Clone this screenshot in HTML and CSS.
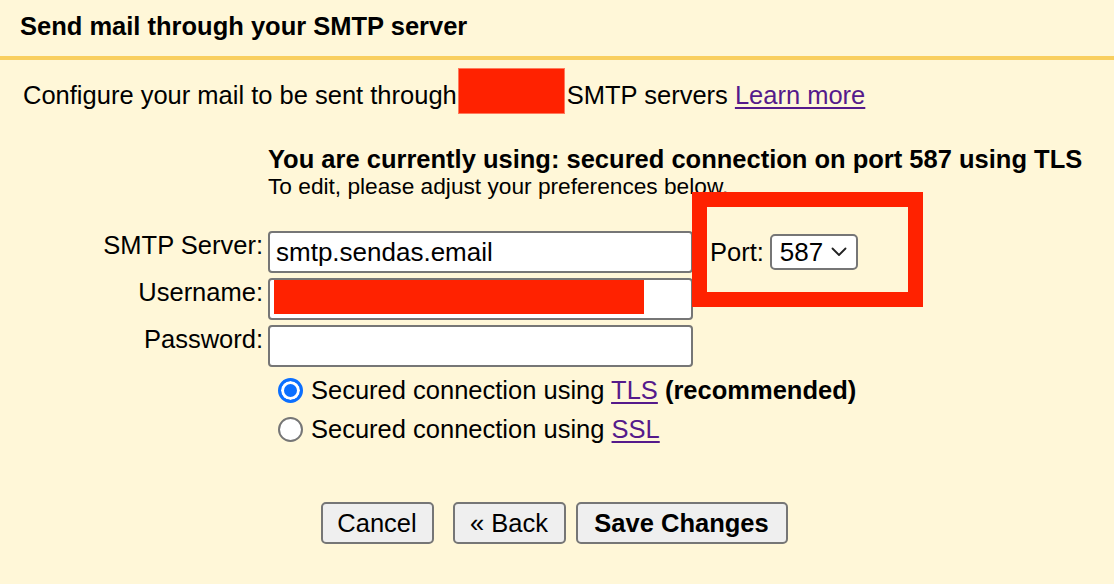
FILE: index.html
```html
<!DOCTYPE html>
<html lang="en">
<head>
<meta charset="utf-8">
<title>Send mail through your SMTP server</title>
<link rel="stylesheet" href="styles.css">
</head>
<body>
<div class="page">
  <header class="hdr">
    <h1 class="title">Send mail through your SMTP server</h1>
  </header>
  <main class="content">
    <p class="intro">Configure your mail to be sent through<span class="redact redact-name"></span>SMTP servers <a class="link" href="#">Learn more</a></p>
    <div class="status">
      <div class="status-main">You are currently using: secured connection on port 587 using TLS</div>
      <div class="status-sub">To edit, please adjust your preferences below.</div>
    </div>
    <div class="form">
      <label class="lbl">SMTP Server:</label>
      <div class="field">smtp.sendas.email</div>
      <div class="port">
        <span class="port-lbl">Port:</span>
        <div class="select"><span>587</span>
          <svg class="chev" width="16" height="10" viewBox="0 0 16 10"><path d="M1.5 1.5 L8 8 L14.5 1.5" fill="none" stroke="#222" stroke-width="1.8" stroke-linecap="round" stroke-linejoin="round"/></svg>
        </div>
      </div>
      <label class="lbl">Username:</label>
      <div class="field"><span class="redact redact-user"></span></div>
      <label class="lbl">Password:</label>
      <div class="field"></div>
      <div class="radios">
        <div class="radio-row"><span class="radio checked"></span><span>Secured connection using <a class="link" href="#">TLS</a> <b>(recommended)</b></span></div>
        <div class="radio-row"><span class="radio"></span><span>Secured connection using <a class="link" href="#">SSL</a></span></div>
      </div>
    </div>
    <div class="buttons">
      <button class="btn btn-cancel">Cancel</button>
      <button class="btn btn-back">« Back</button>
      <button class="btn btn-save">Save Changes</button>
    </div>
  </main>
  <div class="annot"></div>
</div>
</body>
</html>
```
FILE: styles.css
```css
* { box-sizing: border-box; }
html, body { margin: 0; padding: 0; }
body {
  background: #fff7d8;
  font-family: "Liberation Sans", Arial, sans-serif;
  color: #000;
  width: 1114px;
  height: 584px;
  overflow: hidden;
}
.page { position: relative; height: 584px; }

.hdr {
  height: 60px;
  border-bottom: 4px solid #f9cf5f;
  padding-left: 20px;
  display: flex;
  align-items: center;
}
.title {
  margin: 0;
  font-size: 25.5px;
  font-weight: bold;
  line-height: 30px;
  padding-bottom: 4px;
}

.content { padding-top: 8px; }

.intro {
  margin: 0;
  padding-left: 23px;
  font-size: 25.5px;
  line-height: 46px;
  height: 46px;
}
.redact { display: inline-block; background: #ff2200; }
.redact-name {
  width: 107px;
  height: 46px;
  margin: 0 2px 0 1px;
  vertical-align: -10px;
  box-shadow: inset 0 0 0 1px #ff7a5c;
}
.link { color: #551a8b; text-decoration: underline; text-underline-offset: 3px; text-decoration-thickness: 2px; }

.status { margin: 31px 0 0 268px; }
.status-main { font-size: 25.5px; font-weight: bold; line-height: 28px; }
.status-sub { font-size: 22.7px; line-height: 26px; }

.form {
  display: grid;
  grid-template-columns: 263px 425px 1fr;
  grid-auto-rows: auto;
  column-gap: 5px;
  row-gap: 5px;
  margin-top: 32px;
}
.lbl {
  font-size: 25.5px;
  line-height: 29px;
  text-align: right;
  align-self: start;
  grid-column: 1;
}
.field {
  grid-column: 2;
  height: 42px;
  background: #fff;
  border: 2px solid #767676;
  border-radius: 4px;
  font-size: 26px;
  padding: 0 6px;
  display: flex;
  align-items: center;
}
.redact-user { width: 370px; height: 34px; margin-left: -2px; margin-top: -4px; }
.port {
  grid-column: 3;
  grid-row: 1;
  display: flex;
  align-items: center;
  padding-left: 12px;
  font-size: 25.5px;
  gap: 6px;
}
.select {
  height: 36px;
  width: 88px;
  background: #fff;
  border: 2px solid #767676;
  border-radius: 5px;
  display: flex;
  align-items: center;
  padding-left: 8px;
  gap: 8px;
  font-size: 26px;
}
.chev { width: 16px; height: 10px; }

.radios {
  grid-column: 2 / 4;
  padding-left: 10px;
  margin-top: -1px;
}
.radio-row {
  display: flex;
  align-items: center;
  gap: 8px;
  height: 39px;
  font-size: 25.5px;
}
.radio {
  width: 25px;
  height: 25px;
  border-radius: 50%;
  background: #fff;
  border: 2px solid #767676;
  flex: none;
}
.radio.checked {
  border: 3px solid #0b6fff;
  background: #0b6fff;
  box-shadow: inset 0 0 0 3px #fff;
}

.buttons {
  display: flex;
  justify-content: center;
  gap: 19px;
  margin-top: 53px;
  padding-right: 6px;
}
.btn {
  height: 42px;
  background: #efefef;
  border: 2px solid #767676;
  border-radius: 5px;
  font-family: "Liberation Sans", Arial, sans-serif;
  font-size: 25.5px;
  color: #000;
  padding: 0 14px;
}
.btn-cancel { width: 113px; }
.btn-back { width: 113px; }
.btn-save { font-weight: bold; margin-left: -9px; width: 212px; }

.annot {
  position: absolute;
  left: 692px;
  top: 192px;
  width: 231px;
  height: 115px;
  border: 15px solid #ff2200;
}
```
